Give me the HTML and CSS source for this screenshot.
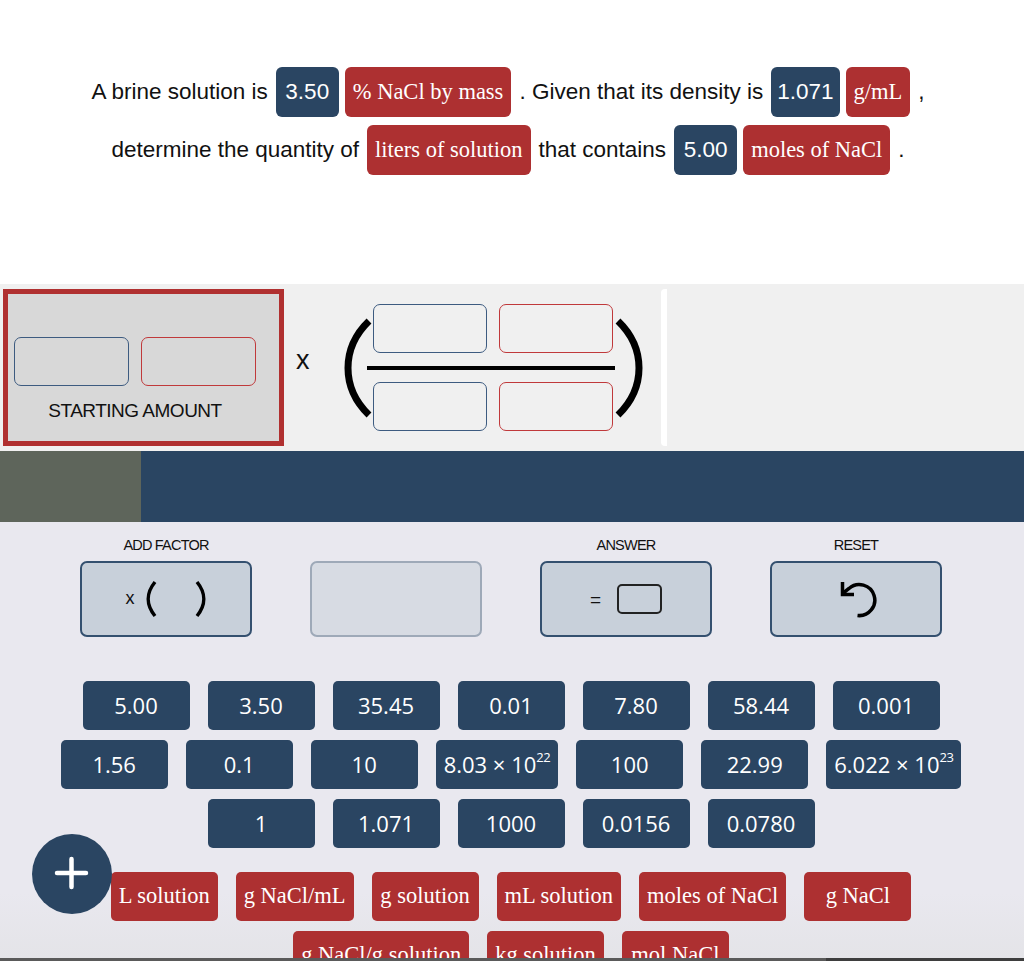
FILE: index.html
```html
<!DOCTYPE html>
<html>
<head>
<meta charset="utf-8">
<title>Dimensional analysis</title>
<link rel="stylesheet" href="styles.css">
</head>
<body>
<div class="page">
  <section class="problem">
    <div class="line">
      <span class="txt">A brine solution is</span>
      <span class="chip num">3.50</span>
      <span class="chip unit">% NaCl by mass</span>
      <span class="txt">. Given that its density is</span>
      <span class="chip num">1.071</span>
      <span class="chip unit">g/mL</span>
      <span class="txt">,</span>
    </div>
    <div class="line">
      <span class="txt">determine the quantity of</span>
      <span class="chip unit">liters of solution</span>
      <span class="txt">that contains</span>
      <span class="chip num">5.00</span>
      <span class="chip unit">moles of NaCl</span>
      <span class="txt">.</span>
    </div>
  </section>

  <section class="work">
    <div class="start">
      <div class="start-boxes">
        <div class="slot slot-n"></div>
        <div class="slot slot-u"></div>
      </div>
      <div class="start-label">STARTING AMOUNT</div>
    </div>
    <div class="times">x</div>
    <svg class="paren paren-l" viewBox="0 0 22 100" width="22" height="100">
      <path d="M24 3 C-4 30 -4 70 24 97" fill="none" stroke="#000" stroke-width="7"/>
    </svg>
    <div class="frac">
      <div class="frac-row">
        <div class="slot slot-n"></div>
        <div class="slot slot-u"></div>
      </div>
      <div class="frac-line"></div>
      <div class="frac-row">
        <div class="slot slot-n"></div>
        <div class="slot slot-u"></div>
      </div>
    </div>
    <svg class="paren paren-r" viewBox="0 0 25 100" width="25" height="100">
      <path d="M1 3 C29 30 29 70 1 97" fill="none" stroke="#000" stroke-width="7"/>
    </svg>
    <div class="divider"></div>
  </section>

  <section class="nav">
    <div class="nav-left"></div>
  </section>

  <section class="panel">
    <div class="controls">
      <div class="ctrl">
        <div class="ctrl-label">ADD FACTOR</div>
        <div class="ctrl-btn">
          <span class="small-x">x</span>
          <svg class="mini-parens" viewBox="0 0 62 36" width="62" height="36">
            <path d="M10 1 C1 12 1 24 10 35" fill="none" stroke="#000" stroke-width="3.5"/>
            <path d="M52 1 C61 12 61 24 52 35" fill="none" stroke="#000" stroke-width="3.5"/>
          </svg>
        </div>
      </div>
      <div class="ctrl">
        <div class="ctrl-label"></div>
        <div class="ctrl-btn ctrl-btn-off"></div>
      </div>
      <div class="ctrl">
        <div class="ctrl-label">ANSWER</div>
        <div class="ctrl-btn">
          <span class="eq">=</span>
          <span class="ans-box"></span>
        </div>
      </div>
      <div class="ctrl">
        <div class="ctrl-label">RESET</div>
        <div class="ctrl-btn">
          <svg class="reset" viewBox="0 0 40 40" width="40" height="40">
            <path d="M4 15 L11 9.5 A15.5 15.5 0 1 1 19.5 36.5" fill="none" stroke="#000" stroke-width="3.5"/>
            <polyline points="4.5,3 4.5,15.5 16,15.5" fill="none" stroke="#000" stroke-width="3.5"/>
          </svg>
        </div>
      </div>
    </div>

    <div class="tiles nums">
      <span class="tile">5.00</span>
      <span class="tile">3.50</span>
      <span class="tile">35.45</span>
      <span class="tile">0.01</span>
      <span class="tile">7.80</span>
      <span class="tile">58.44</span>
      <span class="tile">0.001</span>
      <span class="tile">1.56</span>
      <span class="tile">0.1</span>
      <span class="tile">10</span>
      <span class="tile">8.03 × 10<span class="sup">22</span></span>
      <span class="tile">100</span>
      <span class="tile">22.99</span>
      <span class="tile">6.022 × 10<span class="sup">23</span></span>
      <span class="tile">1</span>
      <span class="tile">1.071</span>
      <span class="tile">1000</span>
      <span class="tile">0.0156</span>
      <span class="tile">0.0780</span>
    </div>

    <div class="tiles units">
      <span class="tile">L solution</span>
      <span class="tile">g NaCl/mL</span>
      <span class="tile">g solution</span>
      <span class="tile">mL solution</span>
      <span class="tile">moles of NaCl</span>
      <span class="tile">g NaCl</span>
      <span class="tile">g NaCl/g solution</span>
      <span class="tile">kg solution</span>
      <span class="tile">mol NaCl</span>
    </div>

    <div class="plus">
      <svg viewBox="0 0 80 80" width="80" height="80">
        <circle cx="40" cy="40" r="40" fill="#2a4562"/>
        <path d="M25 39 H54 M39.5 25 V53" stroke="#fff" stroke-width="4.5" stroke-linecap="round"/>
      </svg>
    </div>
  </section>

  <div class="bottom-bar"></div>
</div>
</body>
</html>
```

FILE: styles.css
```css
* { box-sizing: border-box; }

html, body {
  margin: 0;
  padding: 0;
}

body {
  width: 1024px;
  height: 961px;
  overflow: hidden;
  background: #fff;
  font-family: "Liberation Sans", Arial, sans-serif;
  color: #111;
}

.page {
  display: flex;
  flex-direction: column;
  height: 961px;
}

/* ---------- problem text ---------- */
.problem {
  height: 284px;
  flex: none;
  padding-top: 67px;
  padding-right: 8px;
  display: flex;
  flex-direction: column;
  align-items: center;
  gap: 8px;
  background: #fff;
}

.line {
  display: flex;
  align-items: center;
  gap: 6px;
  height: 50px;
  font-size: 22.5px;
  white-space: nowrap;
}

.txt {
  padding: 0 2px;
}

.chip {
  height: 50px;
  display: inline-flex;
  align-items: center;
  justify-content: center;
  border-radius: 6px;
  color: #fff;
}

.chip.num {
  background: #2a4562;
  min-width: 63px;
  padding: 0 6px;
  font-size: 22.5px;
}

.chip.unit {
  background: #ad3031;
  padding: 0 8px;
  font-family: "Liberation Serif", "Times New Roman", serif;
  font-size: 22.5px;
}

/* ---------- workspace ---------- */
.work {
  height: 167px;
  flex: none;
  background: #f0f0f0;
  display: flex;
  align-items: center;
}

.start {
  margin-left: 3px;
  width: 281px;
  height: 157px;
  border: 5px solid #b03030;
  background: #d8d8d8;
  padding: 43px 0 0 6px;
}

.start-boxes {
  display: flex;
  gap: 12px;
}

.slot {
  width: 115px;
  height: 49px;
  border-radius: 7px;
  border: 1.5px solid #3d5b80;
}

.slot-n { border-color: #3d5b80; }
.slot-u { border-color: #c0393b; }

.start-label {
  width: 242px;
  margin-top: 14px;
  text-align: center;
  font-size: 19px;
  line-height: 22px;
  letter-spacing: -0.5px;
  color: #111;
}

.times {
  margin-left: 12px;
  width: 15px;
  font-size: 27px;
  line-height: 27px;
  margin-bottom: 14px;
  color: #111;
}

.paren {
  flex: none;
  overflow: visible;
}

.paren-l {
  margin-left: 34px;
}

.frac {
  width: 248px;
  flex: none;
}

.frac-row {
  display: flex;
  gap: 12px;
  padding-left: 6px;
}

.frac-row .slot {
  width: 114px;
}

.frac-line {
  height: 4px;
  background: #000;
  margin: 13px 0 12px;
}

.paren-r {
  margin-left: 2px;
}

.divider {
  margin-left: 19px;
  width: 6px;
  height: 157px;
  background: #fff;
  border-radius: 4px 0 0 4px;
}

/* ---------- nav bar ---------- */
.nav {
  height: 71px;
  flex: none;
  background: #2a4562;
  display: flex;
}

.nav-left {
  width: 141px;
  background: #5e655b;
}

/* ---------- panel ---------- */
.panel {
  position: relative;
  height: 436px;
  flex: none;
  overflow: hidden;
  background: linear-gradient(#e9e8ef 0%, #e9e8ef 85%, #e4e4e8 100%);
}

.controls {
  display: flex;
  justify-content: center;
  gap: 58px;
  padding-top: 15px;
  padding-right: 2px;
}

.ctrl {
  width: 172px;
  display: flex;
  flex-direction: column;
  align-items: center;
}

.ctrl-label {
  height: 16px;
  line-height: 16px;
  font-size: 14.5px;
  letter-spacing: -0.8px;
  margin-bottom: 8px;
  color: #111;
}

.ctrl-btn {
  width: 172px;
  height: 76px;
  border: 2px solid #34506f;
  border-radius: 7px;
  background: #c8d0da;
  display: flex;
  align-items: center;
  justify-content: center;
}

.ctrl-btn-off {
  border-color: #9ea9b8;
  background: #d7dbe3;
}

.small-x {
  font-size: 18px;
  line-height: 18px;
  margin-right: 10px;
  margin-bottom: 2px;
  color: #111;
}

.mini-parens {
  overflow: visible;
}

.eq {
  font-size: 19px;
  line-height: 19px;
  margin-right: 16px;
  color: #111;
}

.ans-box {
  width: 45px;
  height: 30px;
  border: 2px solid #222;
  border-radius: 5px;
}

.reset {
  margin-left: 3px;
}

/* ---------- tiles ---------- */
.tiles {
  width: 940px;
  margin-left: 41px;
  display: flex;
  flex-wrap: wrap;
  justify-content: center;
  gap: 10px 18px;
}

.tile {
  min-width: 107px;
  height: 49px;
  padding: 0 8px 2px;
  border-radius: 5px;
  display: inline-flex;
  align-items: center;
  justify-content: center;
  color: #fff;
  white-space: nowrap;
}

.nums {
  margin-top: 44px;
}

.nums .tile {
  background: #2a4562;
  font-family: "Open Sans", "Liberation Sans", sans-serif;
  font-size: 22px;
}

.sup {
  font-size: 13px;
  position: relative;
  top: -7px;
  letter-spacing: -0.5px;
}

.units {
  margin-top: 24px;
}

.units .tile {
  background: #ad3031;
  font-family: "Liberation Serif", "Times New Roman", serif;
  font-size: 22.5px;
}

.plus {
  position: absolute;
  left: 32px;
  top: 312px;
  width: 80px;
  height: 80px;
}

.plus svg {
  display: block;
}

.bottom-bar {
  height: 3px;
  flex: none;
  background: linear-gradient(90deg, #5a5a5a 0, #5a5a5a 826px, #3e3e3e 826px);
}
```
